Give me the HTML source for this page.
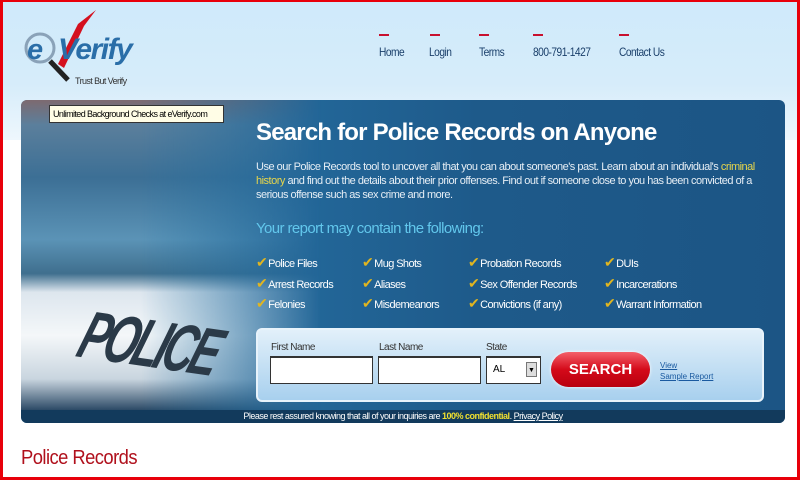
<!DOCTYPE html>
<html><head><meta charset="utf-8"><style>
*{margin:0;padding:0;box-sizing:border-box}
body{width:800px;height:480px;overflow:hidden;font-family:"Liberation Sans",sans-serif;position:relative;background:#fff}
.frame{position:absolute;left:0;top:0;width:800px;height:480px;border:solid #e8000a;border-width:2px 3px 3px 3px;z-index:50;pointer-events:none}
.hdr{position:absolute;left:0;top:0;width:800px;height:140px;background:linear-gradient(#cfeafb,#d6ecfa 60%,#eef7fd)}
.nav a{position:absolute;top:45px;font-size:12px;color:#1a3f6a;text-decoration:none;letter-spacing:-0.6px;transform:scaleX(.85);transform-origin:left}
.nav i{position:absolute;top:34px;width:10px;height:2px;background:#c8102e}
.banner{position:absolute;left:21px;top:100px;width:764px;height:323px;border-radius:6px;overflow:hidden;background:linear-gradient(90deg,#2a7fae 0%,#23689a 35%,#1e5a8a 60%,#1c5585 100%)}
.car{position:absolute;left:0;top:0;width:300px;height:310px;background:
 linear-gradient(180deg,#7d6a70 0%,#5b7f9c 8%,#3c6f95 25%,#5b93b6 45%,#3f6f8e 56%,#dde6ee 62%,#f4f7f9 76%,#c9d5df 90%,#2c4a66 100%);
 -webkit-mask-image:linear-gradient(90deg,#000 40%,transparent 100%);mask-image:linear-gradient(90deg,#000 40%,transparent 100%)}
.police{position:absolute;left:58px;top:220px;font:italic bold 44px "Liberation Sans",sans-serif;color:#2b3a48;transform:skewX(-12deg) rotate(8deg) scaleY(1.5);letter-spacing:-4px}
.tip{position:absolute;left:49px;top:105px;width:175px;height:18px;background:#fffde6;border:1px solid #333;font-size:9px;line-height:16px;padding-left:3px;color:#000;letter-spacing:-.6px;z-index:5}
h1{position:absolute;left:256px;top:119px;font-size:24px;color:#fff;font-weight:bold;letter-spacing:-.8px}
.p{position:absolute;left:256px;top:160px;width:515px;font-size:11px;line-height:14px;color:#e6eef5;letter-spacing:-.5px}
.p span{color:#e8d64a}
h2{position:absolute;left:256px;top:220px;font-size:15px;color:#62c7ec;font-weight:normal;letter-spacing:-.6px}
.li{position:absolute;font-size:11px;color:#fff;letter-spacing:-.6px}
.li:before{content:"✔";color:#e0b520;font-size:14px;margin-right:1px}
.box{position:absolute;left:235px;top:228px;width:508px;height:74px;border-radius:6px;border:2px solid #e8f3fb;background:linear-gradient(#e2f0fa,#a8d0ee)}
.lbl{position:absolute;top:12px;font-size:10px;color:#333;letter-spacing:-.5px}
.inp{position:absolute;top:26px;height:28px;background:#fff;border:1px solid #333;border-top:2px solid #333}
.btn{position:absolute;left:293px;top:22px;width:99px;height:35px;border-radius:18px;background:linear-gradient(#f4606a,#d40a1a 50%,#b8000e);color:#fff;font-weight:bold;font-size:15px;text-align:center;line-height:35px;box-shadow:0 0 3px #fff}
.foot{position:absolute;left:0;top:310px;width:764px;height:13px;background:#123a5c;color:#fff;font-size:9px;text-align:center;line-height:13px;letter-spacing:-.5px}
</style></head><body>
<div class="frame"></div>
<div class="hdr">
 <svg style="position:absolute;left:20px;top:8px" width="130" height="80">
  <path d="M38 56 L58 16 L76 2 L64 18 L44 60 Z" fill="#d4101e"/>
  <circle cx="20" cy="40" r="14" fill="none" stroke="#8aa2b8" stroke-width="3"/>
  <text x="7" y="51" font-family="Liberation Sans" font-weight="bold" font-style="italic" font-size="29" fill="#2a6ea8">e</text>
  <text x="38" y="51" font-family="Liberation Sans" font-weight="bold" font-style="italic" font-size="30" fill="#2a6ea8" letter-spacing="-1.5">Verify</text>
  <line x1="30" y1="53" x2="48" y2="72" stroke="#222" stroke-width="5"/>
  <text x="55" y="76" font-family="Liberation Sans" font-size="9" fill="#333" letter-spacing="-.6">Trust But Verify</text>
 </svg>
 <div class="nav">
  <i style="left:379px"></i><a style="left:379px">Home</a>
  <i style="left:430px"></i><a style="left:429px">Login</a>
  <i style="left:479px"></i><a style="left:479px">Terms</a>
  <i style="left:533px"></i><a style="left:533px">800-791-1427</a>
  <i style="left:619px"></i><a style="left:619px">Contact Us</a>
 </div>
</div>
<div class="tip">Unlimited Background Checks at eVerify.com</div>
<div class="banner">
 <div class="car"></div>
 <div class="police">POLICE</div>
 <div class="box">
  <div class="lbl" style="left:13px">First Name</div>
  <div class="lbl" style="left:121px">Last Name</div>
  <div class="lbl" style="left:228px">State</div>
  <div class="inp" style="left:12px;width:103px"></div>
  <div class="inp" style="left:120px;width:103px"></div>
  <div class="inp" style="left:228px;width:55px;font-size:10px;padding:6px 0 0 6px">AL<span style="position:absolute;right:3px;top:4px;width:11px;height:15px;background:#ddd;border:1px solid #777;font-size:7px;text-align:center;line-height:15px">▼</span></div>
  <div class="btn">SEARCH</div>
  <div style="position:absolute;left:402px;top:30px;font-size:8px;color:#1a5aa0;text-decoration:underline;line-height:11px">View<br>Sample Report</div>
 </div>
 <div class="foot">Please rest assured knowing that all of your inquiries are <b style="color:#f0e030">100% confidential</b>. <u>Privacy Policy</u></div>
</div>
<h1>Search for Police Records on Anyone</h1>
<div class="p">Use our Police Records tool to uncover all that you can about someone's past. Learn about an individual's <span>criminal history</span> and find out the details about their prior offenses. Find out if someone close to you has been convicted of a serious offense such as sex crime and more.</div>
<h2>Your report may contain the following:</h2>
<div class="li" style="left:256px;top:254px">Police Files</div>
<div class="li" style="left:362px;top:254px">Mug Shots</div>
<div class="li" style="left:468px;top:254px">Probation Records</div>
<div class="li" style="left:604px;top:254px">DUIs</div>
<div class="li" style="left:256px;top:275px">Arrest Records</div>
<div class="li" style="left:362px;top:275px">Aliases</div>
<div class="li" style="left:468px;top:275px">Sex Offender Records</div>
<div class="li" style="left:604px;top:275px">Incarcerations</div>
<div class="li" style="left:256px;top:295px">Felonies</div>
<div class="li" style="left:362px;top:295px">Misdemeanors</div>
<div class="li" style="left:468px;top:295px">Convictions (if any)</div>
<div class="li" style="left:604px;top:295px">Warrant Information</div>
<div style="position:absolute;left:21px;top:447px;font-size:20px;color:#b0101c;letter-spacing:-.6px;transform:scaleX(.92);transform-origin:left">Police Records</div>
</body></html>
